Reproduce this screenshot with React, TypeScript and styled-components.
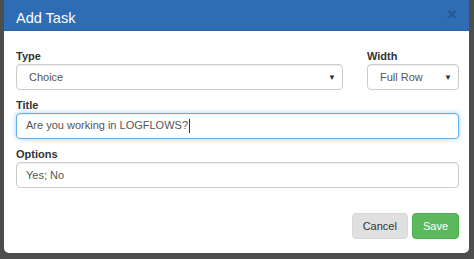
import styled, { createGlobalStyle } from "styled-components";

const GlobalStyle = createGlobalStyle`
    html, body {
        margin: 0;
        padding: 0;
        background: #4d4d4d;
        font-family: "Liberation Sans", Arial, sans-serif;
        color: #333;
    }
`;

const Page = styled.div`
    width: 474px;
    height: 259px;
    padding: 0 5px 0 4px;
    box-sizing: border-box;
`;

const Modal = styled.div`
    width: 465px;
    height: 253px;
    background: #fff;
    border-radius: 0 0 5px 5px;
    overflow: hidden;
    display: flex;
    flex-direction: column;
`;

const Header = styled.div`
    height: 31px;
    background: #2e6cb4;
    border-bottom: 1px solid #2a62a3;
    box-sizing: border-box;
    display: flex;
    align-items: center;
    justify-content: space-between;
    padding: 0 12px 0 12px;
`;

const Title = styled.h4`
    margin: 5px 0 0 0;
    font-size: 14.5px;
    font-weight: normal;
    color: #fff;
`;

const Close = styled.span`
    color: rgba(0, 0, 0, 0.2);
    font-size: 17px;
    font-weight: bold;
    line-height: 1;
    margin-top: -2px;
`;

const Body = styled.div`
    padding: 19px 10px 0 12px;
    display: flex;
    flex-direction: column;
    gap: 9px;
`;

const Row = styled.div`
    display: grid;
    grid-template-columns: 1fr 92px;
    column-gap: 24px;
`;

const Group = styled.div`
    display: flex;
    flex-direction: column;
`;

const Label = styled.label`
    font-size: 11px;
    font-weight: bold;
    line-height: 13px;
    margin-bottom: 1px;
    color: #333;
`;

const Field = styled.div<{ $focus?: boolean }>`
    height: 26px;
    box-sizing: border-box;
    border: 1px solid ${(p) => (p.$focus ? "#66afe9" : "#ccc")};
    border-radius: 4px;
    box-shadow: ${(p) =>
        p.$focus
            ? "inset 0 1px 1px rgba(0,0,0,.075), 0 0 5px rgba(102,175,233,.6)"
            : "inset 0 1px 1px rgba(0,0,0,.075)"};
    display: flex;
    align-items: center;
    justify-content: space-between;
    padding: 0 6px 0 9px;
    font-size: 11px;
    color: #555;
    background: #fff;
`;

const SelectText = styled.span`
    padding-left: 3px;
`;

const Caret = styled.span`
    font-size: 8px;
    color: #333;
`;

const Cursor = styled.span`
    display: inline-block;
    width: 1px;
    height: 14px;
    background: #333;
    vertical-align: middle;
    margin-left: 1px;
`;

const Footer = styled.div`
    display: flex;
    justify-content: flex-end;
    gap: 4px;
    padding: 25px 10px 0 12px;
`;

const Button = styled.button<{ $kind: "default" | "success" }>`
    height: 26px;
    border: 1px solid ${(p) => (p.$kind === "success" ? "#4cae4c" : "#d8d8d8")};
    border-radius: 4px;
    background: ${(p) => (p.$kind === "success" ? "#5cb85c" : "#e0e0e0")};
    color: ${(p) => (p.$kind === "success" ? "#fff" : "#333")};
    font-family: "Liberation Sans", Arial, sans-serif;
    font-size: 11px;
    padding: 0 10px;
`;

export default function App() {
    return (
        <Page>
            <GlobalStyle />
            <Modal>
                <Header>
                    <Title>Add Task</Title>
                    <Close>×</Close>
                </Header>
                <Body>
                    <Row>
                        <Group>
                            <Label>Type</Label>
                            <Field>
                                <SelectText>Choice</SelectText>
                                <Caret>▼</Caret>
                            </Field>
                        </Group>
                        <Group>
                            <Label>Width</Label>
                            <Field>
                                <SelectText>Full Row</SelectText>
                                <Caret>▼</Caret>
                            </Field>
                        </Group>
                    </Row>
                    <Group>
                        <Label>Title</Label>
                        <Field $focus>
                            <span>
                                Are you working in LOGFLOWS?<Cursor />
                            </span>
                        </Field>
                    </Group>
                    <Group>
                        <Label>Options</Label>
                        <Field>
                            <span>Yes; No</span>
                        </Field>
                    </Group>
                </Body>
                <Footer>
                    <Button $kind="default">Cancel</Button>
                    <Button $kind="success">Save</Button>
                </Footer>
            </Modal>
        </Page>
    );
}
